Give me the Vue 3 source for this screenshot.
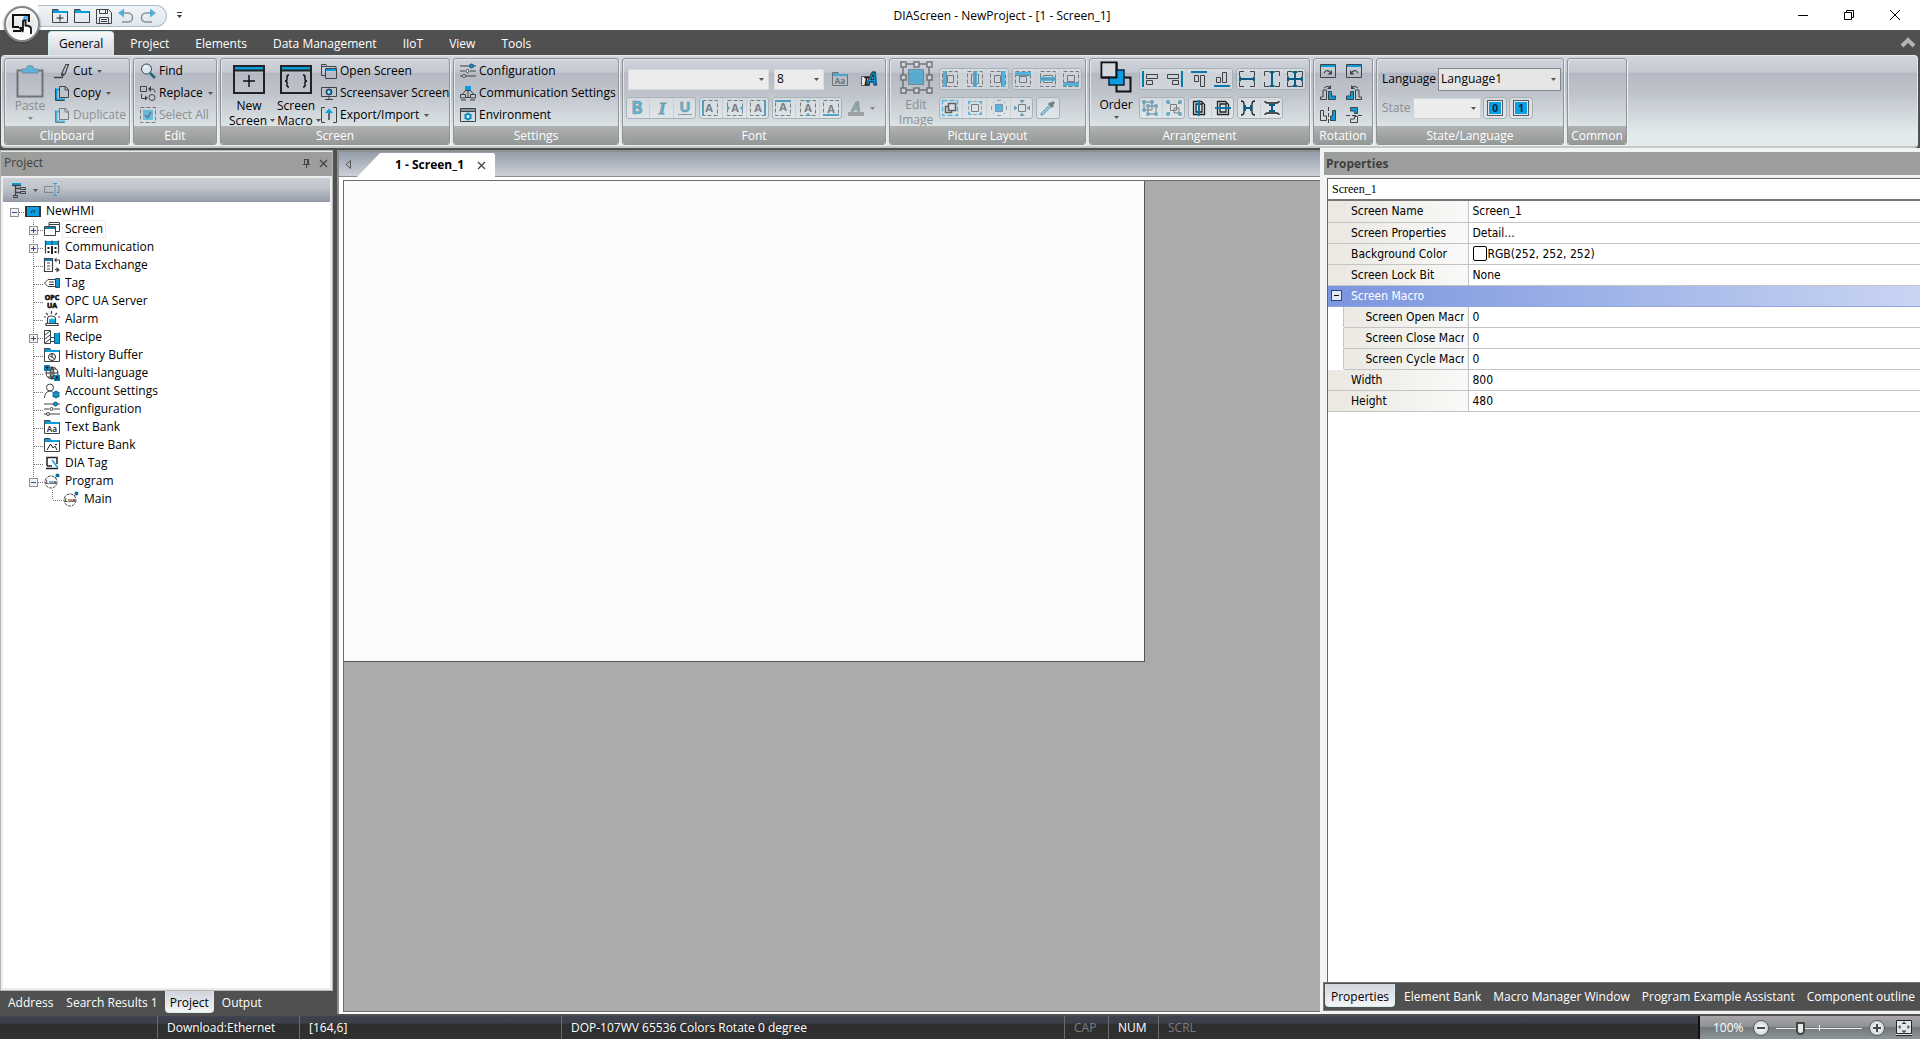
<script setup>
import { ref } from 'vue'

const K = '#3f4347'
const B = '#0a9ddb'
const s = (d, c = K, w = 1) => `<path d="${d}" fill="none" stroke="${c}" stroke-width="${w}"/>`
const f = (d, c = B) => `<path d="${d}" fill="${c}"/>`
const t = (x, y, size, text, c = K, extra = '') =>
  `<text x="${x}" y="${y}" font-size="${size}" font-weight="700" text-anchor="middle" fill="${c}" ${extra}>${text}</text>`
const dash = (d) => `<path d="${d}" fill="none" stroke="${K}" stroke-width="1" stroke-dasharray="4 2"/>`
const folder = s('M.5 14.5V1.5H6l1 2h8.5v11z') + f('M1 2h5l1 1h8v2H1z')
const corners = s('M.5 5V.5H5M11 .5h4.5V5M15.5 11v4.5H11M5 15.5H.5V11')
const frame = dash('M.5 .5h15v15H.5z')

const icons = {
  app: f('M14 4h4v5h-3q-3-2-1-5z', '#5aaef0') + s('M9 15H3V3h16v7M3 19h8', '#111', 2) +
    '<path d="M13 20l-3-4q1-1 3 1V9q1-1.5 2.500 0v4.500q5 0 5.500 3V22" fill="#fff" stroke="#111" stroke-width="1.800"/>',
  newFolder: folder + s('M8 6.5v7M4.5 10h7', '#222'),
  openFolder: folder,
  save: s('M.5 1.5h12l3 3v11H.5zM3.5 1.5v4h8v-4M3.5 15.5v-6h9v6M5 11.5h6M5 13.5h6M9.5 2v3'),
  undo: f('M0 5l6-4.5v9z', '#4fb2dd') + s('M5 5h5a4.5 4.5 0 0 1 0 9H4', '#87919b', 1.5),
  redo: f('M16 5l-6-4.5v9z', '#4fb2dd') + s('M11 5H6a4.5 4.5 0 0 0 0 9h6', '#87919b', 1.5),
  more: s('M0 1.5h5', '#333') + f('M0 4h5l-2.5 3z', '#333'),
  arrow: f('M0 0h5L2.5 3z', '#555'),
  paste: s('M1.5 5.5h25v26h-25z', K, 2) + f('M6 8V4h4q0-3.5 4-3.5t4 3.5h4v4z', '#22a6dc') + s('M6 8V4h4q0-3.5 4-3.5t4 3.5h4v4z', '#4f6f80'),
  cut: s('M0 14.5h9', K, 1.5) + s('M7.5 11L12 1.5h2.5L11 11l-2.5 2z', K, 1.2) + f('M7 10l4 1-3 3z', K),
  copy: s('M5.5 1.5h6l3 3v8h-9zM11 1.5V5h3.5') + s('M5 4.5H2.5v10H11', B, 2) + s('M1.5 3.5v12h9'),
  find: '<circle cx="6.5" cy="6" r="5" fill="#d7e8f0" stroke="#3f4347"/>' + s('M4 5q1-2 3-2', '#fff') + s('M10 10l5 5', '#26627e', 2.5),
  replace: s('M.5 1.5h6v5h-6zM10 4.5q5-2 5 3') + s('M1.5 9v4.5H6') + f('M11 1v6L8 4z', K) + f('M5 10.5v5L8 13z', K) + '<circle cx="12" cy="12.5" r="3" fill="none" stroke="#3f4347"/>',
  selectAll: frame + f('M3 3h10v10H3z', '#2ba7df') + s('M5 8l2.5 2.5L11 5', '#173d52', 1.5),
  newScreen: f('M1 1h30v4H1z') + s('M1 1h30v27H1zM1 5.5h30', '#222', 2) + s('M16 10v12M10 16h12', '#111', 1.5),
  screenMacro: f('M1 1h30v4H1z') + s('M1 1h30v27H1zM1 5.5h30', '#222', 2) + s('M9 10q-2.500 0-2 3t-2 3q2.500 0 2 3t2 3M23 10q2.500 0 2 3t2 3q-2.500 0-2 3t-2 3', '#111', 1.5),
  openScreen: s('M4 12.5H.5V1.5H5l1 2h9V6M.5 3.5h5') + f('M5 6h10v2H5z') + s('M4.5 5.5h11v10h-11z'),
  saver: s('M.5 2.5h15v9H.5zM4 14.5h8M8 12v2') + '<circle cx="8" cy="7" r="3" fill="#0a8dc4" stroke="#26343c"/>' + f('M6.5 6.5l1.5-1 1 1.5-1 2z', '#d9edf5'),
  exportImport: s('M4 .5H.5v15H4M12 .5h3.5v15H12') + s('M8 4v9', K, 1.5) + f('M8 1.5L12 6H4z'),
  config: s('M0 3h10M13 3h3M0 8h5M10 8h6M0 13h2M6 13h10', K, 1.2) + '<circle cx="11.5" cy="3" r="2" fill="#0a9ddb" stroke="#26506a"/><circle cx="7.5" cy="8" r="1.5" fill="#fff" stroke="#3f4347"/><circle cx="4" cy="13" r="1.5" fill="#fff" stroke="#3f4347"/>',
  comm: f('M5 1h6v4H5z') + s('M6 5.5h4M6 5L2.5 9M10 5l3.5 4M8 6v6M6 12.5h4') + s('M.5 9.5h5V13h-5zM10.5 9.5h5V13h-5zM1 15h5M10 15h5'),
  environment: f('M1 2h14v2H1z', '#87939a') + s('M.5 1.5h15v13H.5zM.5 4.5h15') + '<circle cx="8" cy="9.5" r="2.5" fill="#fff" stroke="#0a8dc4" stroke-width="2"/>' + s('M8 5.5V7M8 12v1.5M4.5 7.5l1.5 1M10 10.5l1.5 1M4.5 11.5l1.5-1M10 8.5l1.5-1', '#0a8dc4', 1.5),
  textBank: folder + t(8, 13, 8, 'Aa'),
  fontTA: f('M0 5h9v10H0z', '#e5eaed') + s('M.5 5.5h8v9h-8z', '#555') + t(11, 14, 17, 'A', '#0a9ddb', 'stroke="#123" stroke-width=".8" font-style="italic"') + t(5, 14, 10, 'T', '#111', 'font-style="italic"'),
  bold: t(8, 14, 17, 'B', '#1496d0', 'stroke="#3d6d84" stroke-width=".6"'),
  italic: t(8, 14, 17, 'I', '#1496d0', 'font-style="italic" font-family="Liberation Serif" stroke="#3d6d84" stroke-width=".8"'),
  underline: t(8, 12, 15, 'U', '#1496d0', 'stroke="#3d6d84" stroke-width=".6"') + s('M1 14.5h14', '#46748a'),
  aLeft: frame + f('M0 0h2v16H0z', '#0878a8') + t(7, 12, 11, 'A'),
  aCenter: frame + f('M0 5l3 3-3 3zM16 5l-3 3 3 3z', '#0878a8') + t(8, 12, 11, 'A'),
  aRight: frame + f('M14 0h2v16h-2z', '#0878a8') + t(8, 12, 11, 'A'),
  aTop: frame + f('M0 0h16v2H0z', '#0878a8') + t(8, 11, 11, 'A'),
  aMiddle: frame + f('M5 0h6L8 3zM5 16h6l-3-3z', '#0878a8') + t(8, 12, 11, 'A'),
  aBottom: frame + f('M0 14h16v2H0z', '#0878a8') + t(8, 13, 11, 'A'),
  fontColor: t(8, 11, 13, 'A', '#8dbfd4', 'stroke="#42606e" stroke-width=".8" font-style="italic"') + f('M0 12h16v4H0z', '#808080'),
  editImage: s('M3 3h26v26H3z', '#3f4347', 1.5) + f('M8 8h16v16H8z', '#1fa0d6') + s('M8.5 8.5h15v15h-15z', '#4a6675') +
    [[3, 3], [16, 3], [29, 3], [3, 16], [29, 16], [3, 29], [16, 29], [29, 29]].map(([x, y]) => `<rect x="${x - 2}" y="${y - 2}" width="5" height="5" fill="#dde0e4" stroke="#3f4347" stroke-width="1.5"/>`).join(''),
  pLeft: frame + s('M5.5 4.5h6v7h-6z') + f('M1 0h3v16H1z') + s('M4.5 0v16', '#38617a'),
  pCenter: frame + s('M4.5 3.5h7v9h-7z') + f('M6 0h4v16H6z') + s('M8 0v16', '#215a76'),
  pRight: frame + s('M4.5 4.5h6v7h-6z') + f('M12 0h3v16h-3z') + s('M11.5 0v16', '#38617a'),
  pTop: frame + s('M4.5 5.5h7v6h-7z') + f('M0 1h16v3H0z') + s('M0 4.5h16', '#38617a'),
  pMiddle: frame + s('M3.5 4.5h9v7h-9z') + f('M0 6h16v4H0z') + s('M0 8h16', '#215a76'),
  pBottom: frame + s('M4.5 4.5h7v6h-7z') + f('M0 12h16v3H0z') + s('M0 11.5h16', '#38617a'),
  pOverlap: `<path d="M.5 .5h15v15H.5z" fill="none" stroke="${B}" stroke-dasharray="5 2" stroke-width="1.5"/>` + s('M6.5 3.5h7v7h-7z', '#111', 1.5) + s('M6 6.5H3.5v6h6V11', '#111', 1.5),
  pExpand: s('M4.5 4.5h7v7h-7z') + f('M1 1h4L1 5zM15 1v4l-4-4zM1 15v-4l4 4zM15 15h-4l4-4z') + s('M6 1.5h4M6 14.5h4M1.5 6v4M14.5 6v4', '#718087'),
  pFill: f('M4 4h8v8H4z') + s('M4.5 4.5h7v7h-7z', '#4a6675') + s('M6 .5h4M6 15.5h4M.5 6v4M15.5 6v4M2 2l1 1M14 2l-1 1M2 14l1-1M14 14l-1-1', '#6c777d'),
  pSize: s('M4.5 4.5h7v7h-7z') + f('M5.5 0h5L8 3.5zM5.5 16h5L8 12.5zM0 5.5v5L3.5 8zM16 5.5v5L12.5 8z', '#27769a'),
  dropper: s('M1 15l9-9', '#257da3', 3) + s('M2 14l8-8', '#bce0ee') + s('M9 3l4 4M11 5l3-3', K, 3),
  order: s('M1.5 1.5h15v15h-15z', '#111', 2) + s('M16.5 16.5h14v14h-14z', '#111', 2) + f('M9 9h15v15H9z', '#0a9fe4') + s('M9 9h15v15H9z', '#123', 1.5) + f('M2.5 2.5h13v13h-13z', '#d2d6dd') + s('M1.5 16.5h15v-15', '#111', 2),
  alLeft: s('M1 0v16', '#0878a8', 2) + s('M4.5 3.5h11v4h-11zM4.5 9.5h6v4h-6z'),
  alRight: s('M15 0v16', '#0878a8', 2) + s('M.5 3.5h11v4H.5zM5.5 9.5h6v4h-6z'),
  alTop: s('M0 1h16', '#0878a8', 2) + s('M3.5 4.5h4v6h-4zM9.5 4.5h4v11h-4z'),
  alBottom: s('M0 15h16', '#0878a8', 2) + s('M2.5 6.5h4v5h-4zM8.5 1.5h4v10h-4z'),
  sameW: corners + s('M1 8h14M1 5.5v5M15 5.5v5', '#075d82', 2),
  sameH: corners + s('M8 1v14M5.5 1h5M5.5 15h5', '#075d82', 2),
  sameWH: corners + s('M8 1v14M5.5 1h5M5.5 15h5M1 8h14M1 5.5v5M15 5.5v5', '#075d82', 2),
  group: s('M2 2h8v8H2zM6 6h8v8H6z') + [[2, 2], [10, 2], [2, 10], [6, 6], [14, 6], [14, 14], [6, 14]].map(([x, y]) => `<circle cx="${x}" cy="${y}" r="2" fill="#2186ad"/>`).join(''),
  ungroup: s('M4.5 4.5h6v6h-6zM8 8h5v5H8z') + s('M2 2l2 2M14 2l-2 2M2 14l2-2M14 14l-1-1') + [[2, 2], [14, 2], [2, 14], [14, 14]].map(([x, y]) => `<circle cx="${x}" cy="${y}" r="2" fill="#2186ad"/>`).join(''),
  pageV: s('M2.5 1.5h8l3 3v10h-11zM5 4h6v8H5z', '#222', 1.3) + s('M8 0v16', '#0878a8', 2),
  pageH: s('M2.5 1.5h8l3 3v10h-11zM5 4h6v8H5z', '#222', 1.3) + s('M0 8h16', '#0878a8', 2),
  spaceH: s('M1 1q3 0 3 3v8q0 3-3 3M15 1q-3 0-3 3v8q0 3 3 3', '#222', 1.3) + s('M4 8h8M5 5v6M11 5v6', '#075d82', 2),
  spaceV: s('M1 1q0 2 3 2h8q3 0 3-2M1 15q0-2 3-2h8q3 0 3 2', '#222', 1.3) + s('M8 4v8M5 5h6M5 11h6', '#075d82', 2),
  rotR: f('M1 2h14v2H1z') + s('M.5 1.5h15v13H.5z') + s('M4 10q2-4 6-1', K, 1.2) + f('M12 7v4.5H7.500z', K),
  rotL: f('M1 2h14v2H1z') + s('M.5 1.5h15v13H.5z') + s('M12 10q-2-4-6-1', K, 1.2) + f('M4 7v4.5h4.500z', K),
  rot90R: s('M6.5 5v9.5h-6V12H3V5zM4 3q3-3 6-1') + f('M11 0v4H7z', K) + f('M8 6h3v5h4v4H8z') + s('M8.5 6.5h3V11h4v3.5h-7z'),
  rot90L: s('M9.5 5v9.5h6V12H13V5zM12 3q-3-3-6-1') + f('M5 0v4h4z', K) + f('M8 6H5v5H1v4h7z') + s('M7.5 6.5h-3V11h-4v3.5h7z'),
  flipH: s('M.5 3.5h3V9h3v4.5h-6z') + dash('M8.5 0v16') + f('M16 3h-3v6h-3v5h6z') + s('M15.5 3.5h-3V9h-2v4.5h5z'),
  flipV: f('M4 1h8v6H9V4H4z') + s('M4.5 .5h7v6h-3V4h-4zM4.5 15.5h7v-6h-3V12h-4z') + dash('M0 8.5h16'),
  state0: f('M0 0h16v16H0z', '#555b5e') + f('M1 1h14v14H1z', '#e7e7e7') + f('M2 2h12v12H2z', '#0a9fe4') + t(8, 12, 10, '0', '#0b2738'),
  state1: f('M0 0h16v16H0z', '#555b5e') + f('M1 1h14v14H1z', '#e7e7e7') + f('M2 2h12v12H2z', '#0a9fe4') + t(8, 12, 10, '1', '#0b2738'),
  treeView: f('M1 1h9v3H1z') + s('M1 3.5h9M4.5 4v9M5 6.5h4M5 10.5h4', K, 1.3) + s('M9.5 5.5h5v2h-5zM9.5 9.5h5v2h-5zM2.5 13.5h4v2h-4z'),
  rename: s('M9 4.5H.5v6H9M13 4.5h2v6h-2', '#80858a') + s('M9 1.5h4M11 1.5v12M9 13.5h4', '#39a3d3'),
  pin: s('M2.5 1v5M6.5 1v5M2 1.5h5M1 6.5h7M4.5 7v3M5.500 1v5', '#444'),
  close: s('M1 1l7 7M8 1L1 8', '#444', 1.3),
  hmi: f('M0 3h16v11H0z', '#333') + f('M2 4h12v9H2z', '#0a9fe4') + s('M6 10l1.5-3M8.5 10L10 7', '#123'),
  screens: s('M5 5V1.5h10.5v9H12M5 3.5h10') + f('M1 6h10v2H1z', '#0b83b4') + s('M.5 5.5h11v9H.5z'),
  commTree: f('M1 2h14v4H1z') + s('M1.5 1.5v13M14.5 1.5v13M8 1.5V6', K, 1.2) + s('M4.5 8v2M4.5 12v2M11.5 8v2M11.5 12v2M8 7v8', '#222', 2),
  exchange: s('M.5 1.5h8v13h-8zM3 6h3M3 9h3M3 12h3', K, 1.2) + f('M1 2h7v2H1z', '#0b83b4') + s('M11 3h4.5v4M11 12.5h4') + f('M12.5 .5v5L10 3zM12.5 10v5.5L16 13z', K),
  tag: s('M11 4.5H4L.5 8 4 11.5h7M5 7h5M5 9.5h5') + f('M12 4h3v8h-3z') + s('M11.5 3.5h4v9h-4z'),
  opc: t(8, 7, 7, 'OPC', '#111', 'stroke="#111" stroke-width=".6"') + t(8, 15, 7, 'UA', '#111', 'stroke="#111" stroke-width=".6"'),
  alarm: s('M3.5 12V8q0-3 4-3t4 3v4M2 14.5h12v-2H2zM7.5 0v3M2 2l2 2M13 2l-2 2M0 6h2M14 6h2', K, 1.2) + f('M5 12V9q0-1.5 3-1.5T11 9v3z', '#12a9ec'),
  recipe: s('M.5 1.5h6v13h-6zM1 6l5-4M1 10l5-4M1 14l5-4') + s('M6 8.5h5M6 12.5h5') + f('M11 4h4v10h-4z') + s('M10.5 4v10.5h5v-11', '#075d82'),
  history: folder + '<circle cx="8" cy="10" r="3.5" fill="#fff" stroke="#222"/>' + s('M8 7v3l2 1.5M6 9l2 1', '#222'),
  globe: '<circle cx="8" cy="8" r="6" fill="#fff" stroke="#333"/>' + s('M2 8h12M8 2v12M4 4h8M4 12h8M8 2q-4 6 0 12M8 2q4 6 0 12', '#333') + f('M0 0h6v6H0zM10 10h6v6h-6z', '#0b83b4') + s('M1.5 2.500h3M3 1v4M11.500 15l1.500-4 1.500 4', '#123'),
  account: '<circle cx="6" cy="4.5" r="3.5" fill="none" stroke="#3f4347"/>' + s('M.5 15q0-6 5-7q2 0 3 1') + '<circle cx="12" cy="11.5" r="2.5" fill="#fff" stroke="#0b83b4" stroke-width="2"/>' + s('M12 7.5v8M8.5 9.5l7 4M8.5 13.5l7-4', '#0b6f9c'),
  picture: folder + s('M3 13l3.5-6L9 11l2-2 2 4M11 7.5h2', '#222'),
  diaTag: s('M3 11V2.500h10V9', '#222', 1.5) + s('M2 13.5h12M3 11h5', '#222', 1.5) + s('M8 5l6 8', '#1ba3e4', 1.5),
  lua: '<circle cx="7" cy="9" r="6" fill="none" stroke="#444" stroke-dasharray="3 1"/>' + s('M11 5l2-2', '#444') + '<circle cx="13.5" cy="2.5" r="2" fill="#0b6f9c"/>' + t(7, 11, 6, 'Lua', '#333'),
  fit: f('M0 0h16v16H0z', '#e4e6e8') + s('M.5 .5h15v13H.5zM0 15.5h16', '#222') + f('M5.5 4h5L8 1.5zM5.5 10.5h5L8 13zM4.5 5v4L2 7zM11.5 5v4L14 7z', '#234a5c')
}

const menus = ['General', 'Project', 'Elements', 'Data Management', 'IIoT', 'View', 'Tools']
const quick = [['newFolder', 'New'], ['openFolder', 'Open'], ['save', 'Save'], ['undo', 'Undo'], ['redo', 'Redo']]
const clip = [{ i: 'cut', l: 'Cut', a: true }, { i: 'copy', l: 'Copy', a: true }, { i: 'copy', l: 'Duplicate', d: true }]
const edit = [{ i: 'find', l: 'Find' }, { i: 'replace', l: 'Replace', a: true }, { i: 'selectAll', l: 'Select All', d: true }]
const screen = [{ i: 'openScreen', l: 'Open Screen' }, { i: 'saver', l: 'Screensaver Screen' }, { i: 'exportImport', l: 'Export/Import', a: true }]
const settings = [{ i: 'config', l: 'Configuration' }, { i: 'comm', l: 'Communication Settings' }, { i: 'environment', l: 'Environment' }]
const fontSets = [['bold', 'italic', 'underline'], ['aLeft', 'aCenter', 'aRight'], ['aTop', 'aMiddle', 'aBottom']]
const picSets = [[['pLeft', 'pCenter', 'pRight'], ['pTop', 'pMiddle', 'pBottom']], [['pOverlap', 'pExpand', 'pFill', 'pSize'], ['dropper']]]
const arrSets = [[['alLeft', 'alRight', 'alTop', 'alBottom'], ['sameW', 'sameH', 'sameWH']], [['group', 'ungroup'], ['pageV', 'pageH'], ['spaceH', 'spaceV']]]
const dimmed = ['group', 'ungroup']
const rotations = ['rotR', 'rotL', 'rot90R', 'rot90L', 'flipH', 'flipV']

const tree = [
  { l: 'NewHMI', i: 'hmi', n: 0, x: '-' },
  { l: 'Screen', i: 'screens', n: 1, x: '+', hot: true },
  { l: 'Communication', i: 'commTree', n: 1, x: '+' },
  { l: 'Data Exchange', i: 'exchange', n: 1 },
  { l: 'Tag', i: 'tag', n: 1 },
  { l: 'OPC UA Server', i: 'opc', n: 1 },
  { l: 'Alarm', i: 'alarm', n: 1 },
  { l: 'Recipe', i: 'recipe', n: 1, x: '+' },
  { l: 'History Buffer', i: 'history', n: 1 },
  { l: 'Multi-language', i: 'globe', n: 1 },
  { l: 'Account Settings', i: 'account', n: 1 },
  { l: 'Configuration', i: 'config', n: 1 },
  { l: 'Text Bank', i: 'textBank', n: 1 },
  { l: 'Picture Bank', i: 'picture', n: 1 },
  { l: 'DIA Tag', i: 'diaTag', n: 1 },
  { l: 'Program', i: 'lua', n: 1, x: '-', end: true },
  { l: 'Main', i: 'lua', n: 2, end: true }
]

const props = [
  { k: 'Screen Name', v: 'Screen_1' },
  { k: 'Screen Properties', v: 'Detail...' },
  { k: 'Background Color', v: 'RGB(252, 252, 252)', swatch: true },
  { k: 'Screen Lock Bit', v: 'None' },
  { k: 'Screen Macro', head: true },
  { k: 'Screen Open Macro', v: '0', sub: true },
  { k: 'Screen Close Macro', v: '0', sub: true },
  { k: 'Screen Cycle Macro', v: '0', sub: true },
  { k: 'Width', v: '800' },
  { k: 'Height', v: '480' }
]
const leftTabs = ['Address', 'Search Results 1', 'Project', 'Output']
const rightTabs = ['Properties', 'Element Bank', 'Macro Manager Window', 'Program Example Assistant', 'Component outline']
const objectName = ref('Screen_1')
const language = ref('Language1')
const fontSize = ref('8')
const zoom = ref(27)
</script>

<template>
  <div class="app">
    <header class="titlebar">
      <button class="orb" aria-label="Application menu"><svg width="24" height="24" viewBox="0 0 24 24" v-html="icons.app" /></button>
      <div class="quick">
        <button v-for="q in quick" :key="q[0]" :aria-label="q[1]"><svg width="16" height="16" viewBox="0 0 16 16" v-html="icons[q[0]]" /></button>
      </div>
      <button class="more" aria-label="Customize toolbar"><svg width="5" height="8" v-html="icons.more" /></button>
      <h1>DIAScreen - NewProject - [1 - Screen_1]</h1>
      <div class="window-buttons">
        <button aria-label="Minimize"><svg width="11" height="11"><path d="M0 5.5h10" stroke="#000" /></svg></button>
        <button aria-label="Restore"><svg width="11" height="11"><path d="M.5 2.5h7v7h-7zM2.5 2.5v-2h7v7h-2" fill="none" stroke="#000" /></svg></button>
        <button aria-label="Close"><svg width="11" height="11"><path d="M0 0l10 10M10 0L0 10" stroke="#000" /></svg></button>
      </div>
    </header>

    <nav class="menubar">
      <button v-for="(m, n) in menus" :key="m" :class="{ active: n === 0 }">{{ m }}</button>
      <button class="collapse" aria-label="Collapse ribbon"><svg width="16" height="12"><path d="M2 9l6-6 6 6" fill="none" stroke="#b4b4b4" stroke-width="4" /></svg></button>
    </nav>

    <div class="ribbon">
      <section class="group w-clip">
        <div class="body">
          <button class="big paste dim">
            <svg width="28" height="33" viewBox="0 0 28 33" v-html="icons.paste" />
            <span>Paste</span>
            <svg class="down" width="5" height="3" v-html="icons.arrow" />
          </button>
          <div class="stack">
            <button v-for="b in clip" :key="b.l" class="tool" :class="{ dim: b.d }"><svg width="16" height="16" v-html="icons[b.i]" /><span>{{ b.l }}</span><svg v-if="b.a" class="tri" width="5" height="3" v-html="icons.arrow" /></button>
          </div>
        </div>
        <h2>Clipboard</h2>
      </section>

      <section class="group w-edit">
        <div class="body">
          <div class="stack">
            <button v-for="b in edit" :key="b.l" class="tool" :class="{ dim: b.d }"><svg width="16" height="16" v-html="icons[b.i]" /><span>{{ b.l }}</span><svg v-if="b.a" class="tri" width="5" height="3" v-html="icons.arrow" /></button>
          </div>
        </div>
        <h2>Edit</h2>
      </section>

      <section class="group w-screen">
        <div class="body">
          <button class="big wide"><svg width="32" height="33" v-html="icons.newScreen" /><span>New</span><span class="line">Screen<svg width="5" height="3" v-html="icons.arrow" /></span></button>
          <button class="big wide"><svg width="32" height="33" v-html="icons.screenMacro" /><span>Screen</span><span class="line">Macro<svg width="5" height="3" v-html="icons.arrow" /></span></button>
          <div class="stack">
            <button v-for="b in screen" :key="b.l" class="tool"><svg width="16" height="16" v-html="icons[b.i]" /><span>{{ b.l }}</span><svg v-if="b.a" class="tri" width="5" height="3" v-html="icons.arrow" /></button>
          </div>
        </div>
        <h2>Screen</h2>
      </section>

      <section class="group w-settings">
        <div class="body">
          <div class="stack">
            <button v-for="b in settings" :key="b.l" class="tool"><svg width="16" height="16" v-html="icons[b.i]" /><span>{{ b.l }}</span></button>
          </div>
        </div>
        <h2>Settings</h2>
      </section>

      <section class="group w-font">
        <div class="rows">
          <div class="row">
            <span class="combo family"><select aria-label="Font family"><option></option></select><svg width="5" height="3" v-html="icons.arrow" /></span>
            <span class="combo size"><select v-model="fontSize" aria-label="Font size"><option>8</option></select><svg width="5" height="3" v-html="icons.arrow" /></span>
            <button class="plain dim" aria-label="Text bank"><svg width="16" height="16" v-html="icons.textBank" /></button>
            <button class="plain" aria-label="Font"><svg width="18" height="16" v-html="icons.fontTA" /></button>
          </div>
          <div class="row">
            <div v-for="(set, n) in fontSets" :key="n" class="set dim">
              <button v-for="i in set" :key="i" :aria-label="i"><svg width="16" height="16" v-html="icons[i]" /></button>
            </div>
            <button class="plain colour dim" aria-label="Font color"><svg width="16" height="16" v-html="icons.fontColor" /><svg width="5" height="3" v-html="icons.arrow" /></button>
          </div>
        </div>
        <h2>Font</h2>
      </section>

      <section class="group w-picture">
        <div class="body">
          <button class="big raised dim"><svg width="32" height="33" v-html="icons.editImage" /><span>Edit</span><span>Image</span></button>
          <div class="rows inner">
            <div v-for="(r, n) in picSets" :key="n" class="row">
              <div v-for="(set, m) in r" :key="m" class="set dim">
                <button v-for="i in set" :key="i" :aria-label="i"><svg width="16" height="16" v-html="icons[i]" /></button>
              </div>
            </div>
          </div>
        </div>
        <h2>Picture Layout</h2>
      </section>

      <section class="group w-arrange">
        <div class="body">
          <button class="big raised"><svg width="32" height="33" v-html="icons.order" /><span>Order</span><svg class="down" width="5" height="3" v-html="icons.arrow" /></button>
          <div class="rows inner">
            <div v-for="(r, n) in arrSets" :key="n" class="row">
              <div v-for="(set, m) in r" :key="m" class="set" :class="{ dim: dimmed.includes(set[0]) }">
                <button v-for="i in set" :key="i" :aria-label="i"><svg width="16" height="16" v-html="icons[i]" /></button>
              </div>
            </div>
          </div>
        </div>
        <h2>Arrangement</h2>
      </section>

      <section class="group w-rotate">
        <div class="rotations">
          <button v-for="i in rotations" :key="i" :aria-label="i"><svg width="16" height="16" v-html="icons[i]" /></button>
        </div>
        <h2>Rotation</h2>
      </section>

      <section class="group w-state">
        <div class="rows state">
          <div class="row tight">
            <label for="lang">Language</label>
            <span class="combo lang"><select id="lang" v-model="language"><option>Language1</option></select><svg width="5" height="3" v-html="icons.arrow" /></span>
          </div>
          <div class="row tight">
            <label for="state" class="faint">State</label>
            <span class="combo st"><select id="state" disabled><option></option></select><svg width="5" height="3" v-html="icons.arrow" /></span>
            <div class="set"><button aria-label="State 0"><svg width="16" height="16" v-html="icons.state0" /></button></div>
            <div class="set"><button aria-label="State 1"><svg width="16" height="16" v-html="icons.state1" /></button></div>
          </div>
        </div>
        <h2>State/Language</h2>
      </section>

      <section class="group w-common">
        <div class="body"></div>
        <h2>Common</h2>
      </section>
    </div>

    <main class="workspace">
      <aside class="left">
        <div class="panel">
          <div class="panel-title"><span>Project</span>
            <button aria-label="Pin"><svg width="9" height="10" v-html="icons.pin" /></button>
            <button aria-label="Close panel"><svg width="9" height="9" v-html="icons.close" /></button>
          </div>
          <div class="panel-body">
            <div class="toolbar">
              <button aria-label="Tree view"><svg width="16" height="16" v-html="icons.treeView" /></button>
              <svg width="5" height="3" v-html="icons.arrow" />
              <button aria-label="Rename"><svg width="16" height="16" v-html="icons.rename" /></button>
            </div>
            <ul class="tree">
              <li v-for="r in tree" :key="r.l" :class="'depth' + r.n">
                <svg class="branch" width="21" height="18">
                  <path v-if="r.n" :d="r.end ? 'M10.5 0v10' : 'M10.5 0v18'" stroke="#777" stroke-dasharray="1 1" />
                  <path d="M11 10.5h10" stroke="#777" stroke-dasharray="1 1" />
                  <template v-if="r.x">
                    <rect x="6.5" y="6.5" width="8" height="8" fill="#f4f4f4" stroke="#919191" />
                    <path :d="r.x === '+' ? 'M8 10.5h5M10.5 8v5' : 'M8 10.5h5'" stroke="#2b4a8b" />
                  </template>
                </svg>
                <svg width="16" height="16" v-html="icons[r.i]" />
                <span :class="{ hot: r.hot }">{{ r.l }}</span>
              </li>
            </ul>
          </div>
        </div>
        <div class="tabs">
          <button v-for="l in leftTabs" :key="l" :class="{ active: l === 'Project' }">{{ l }}</button>
        </div>
      </aside>

      <section class="document">
        <div class="doc-tabs">
          <button class="prev" aria-label="Previous tab"><svg width="6" height="9"><path d="M5.5 .5v8L1 4.5z" fill="none" stroke="#555" /></svg></button>
          <div class="doc-tab">
            <b>1 - Screen_1</b>
            <button aria-label="Close tab"><svg width="9" height="9" v-html="icons.close" /></button>
          </div>
        </div>
        <div class="canvas"><div class="hmi-screen"></div></div>
      </section>

      <aside class="right">
        <div class="panel-title strong"><span>Properties</span></div>
        <div class="props">
          <input v-model="objectName" aria-label="Object name">
          <table>
            <tbody>
              <tr v-for="p in props" :key="p.k" :class="{ head: p.head, sub: p.sub }">
                <td class="margin"><svg v-if="p.head" width="11" height="11"><rect x=".5" y=".5" width="10" height="10" fill="#e3e8f6" stroke="#33467c" /><path d="M3 5.5h5" stroke="#111" /></svg></td>
                <th scope="row"><div>{{ p.k }}</div></th>
                <td class="value"><i v-if="p.swatch"></i>{{ p.v }}</td>
              </tr>
            </tbody>
          </table>
        </div>
        <div class="tabs right-tabs">
          <button v-for="l in rightTabs" :key="l" :class="{ active: l === 'Properties' }">{{ l }}</button>
        </div>
      </aside>
    </main>

    <footer class="status">
      <span class="cell c1"></span>
      <span class="cell c2">Download:Ethernet</span>
      <span class="cell c3">[164,6]</span>
      <span class="cell c4">DOP-107WV 65536 Colors Rotate 0 degree</span>
      <span class="cell cap off">CAP</span>
      <span class="cell num">NUM</span>
      <span class="cell scrl off">SCRL</span>
      <div class="zoom">
        <span>100%</span>
        <button class="round" aria-label="Zoom out"><svg width="14" height="14"><path d="M3 7h8" stroke="#444b55" stroke-width="2" /></svg></button>
        <span class="track"><input v-model="zoom" type="range" min="0" max="100" aria-label="Zoom"><i></i></span>
        <button class="round" aria-label="Zoom in"><svg width="14" height="14"><path d="M3 7h8M7 3v8" stroke="#444b55" stroke-width="2" /></svg></button>
        <button class="fit" aria-label="Fit"><svg width="16" height="16" v-html="icons.fit" /></button>
      </div>
    </footer>
  </div>
</template>

<style>
body { background: #505050; }
</style>

<style scoped>
* { box-sizing: border-box; }
.app { height: 100vh; display: flex; flex-direction: column; background: #505050; color: #000; font: 12px/16px "Open Sans", "Noto Sans", sans-serif; overflow: hidden; white-space: nowrap; }
button { margin: 0; padding: 0; border: 0; background: none; font: inherit; color: inherit; display: flex; align-items: center; }
svg { flex: none; display: block; overflow: visible; }
h1, h2 { margin: 0; font: inherit; }
.dim { color: #8b8e91; }
.dim svg { opacity: .62; }

.titlebar { flex: none; height: 30px; background: #fff; display: flex; align-items: center; padding-left: 4px; position: relative; z-index: 2; }
.orb { position: relative; top: 9px; width: 36px; height: 36px; justify-content: center; border: 2px solid #83878b; border-radius: 50%; background: linear-gradient(#fff, #e5e7e8 50%, #fff); box-shadow: inset 0 0 2px 1px #fff, 0 1px 2px #444; }
.quick { height: 22px; margin: 1px 0 0 -2px; padding: 0 10px 0 14px; display: flex; align-items: center; gap: 6px; border: 1px solid #b5bec8; border-left: 0; border-radius: 0 11px 11px 0; background: linear-gradient(#f1f4f7, #e0e6ec); }
.more { margin: 0 0 0 10px; }
h1 { flex: 1; text-align: center; padding: 2px 0 0 24px; }
.window-buttons { display: flex; gap: 35px; padding-right: 19px; }

.menubar { flex: none; height: 25px; display: flex; padding-left: 48px; color: #fff; }
.menubar button { padding: 2px 13px 0; }
.menubar .active { margin: 1px 3px 0 0; padding: 0 10px; color: #000; border: 1px solid #c9edee; border-bottom: 0; border-radius: 4px 4px 0 0; background: linear-gradient(#f6f8f8, #d2d5dd); }
.menubar .collapse { margin: 0 4px 0 auto; padding: 0; }

.ribbon { flex: none; height: 93px; margin: 0 2px 0 1px; padding: 2px 2px 1px; display: flex; gap: 3px; border: 1px solid #e5e9eb; border-bottom: 2px solid #c4c7c8; border-radius: 4px; background: linear-gradient(#d3d6de, #c4c8d1 18%, #b5b9c4 19%, #bfc4cc 42%, #e2eaeb 85%); }
.group { flex: none; display: flex; flex-direction: column; border: 1px solid #8f9396; border-radius: 3px; box-shadow: 1px 1px 0 #eef2f3, inset 1px 1px 0 #e2e5e9; overflow: hidden; }
.group h2 { flex: none; height: 18px; padding-top: 1px; line-height: 17px; color: #fff; text-align: center; background: linear-gradient(#afb2b1, #949897); }
.w-clip { width: 126px; } .w-edit { width: 84px; } .w-screen { width: 230px; } .w-settings { width: 166px; } .w-font { width: 264px; }
.w-picture { width: 197px; } .w-arrange { width: 221px; } .w-rotate { width: 60px; } .w-state { width: 188px; } .w-common { width: 60px; }
.body { flex: 1; min-height: 0; display: flex; padding: 0 0 0 6px; }
.stack { flex: none; display: flex; flex-direction: column; padding-top: 1px; }
.tool { height: 22px; gap: 3px; }
.tool .tri { margin-left: 2px; }
.big { flex: none; flex-direction: column; width: 42px; padding-top: 6px; line-height: 15px; }
.big.paste { width: 36px; margin: 0 6px 0 1px; }
.big.wide { width: 44px; margin-right: 3px; }
.big.raised { padding-top: 2px; width: 42px; margin: 0 2px 0 -1px; }
.big.raised > svg:first-child { margin-bottom: 3px; }
.big .line { display: flex; align-items: center; gap: 3px; margin-right: -6px; }
.big .down { margin-top: 4px; }
.rows { flex: 1; min-height: 0; display: flex; flex-direction: column; gap: 7px; padding: 9px 3px 0; }
.rows.inner { padding: 9px 0 0; }
.row { display: flex; gap: 3px; height: 22px; align-items: center; }
.set { flex: none; display: flex; height: 22px; border: 1px solid #a8b1b6; border-radius: 3px; background: rgba(240, 246, 248, .4); }
.set button { width: 24px; justify-content: center; }
.set button:first-child { width: 22px; justify-content: flex-end; padding-right: 4px; }
.set button:last-child { width: 22px; justify-content: flex-start; padding-left: 3px; }
.set button:only-child { width: 22px; justify-content: center; padding: 0; }
.set button + button { border-left: 1px solid #c9d0d3; }
.plain { padding: 0 3px 0 4px; }
.plain + .plain { margin-left: 3px; }
.plain.colour { gap: 6px; padding-left: 3px; }
.combo { flex: none; display: flex; align-items: center; position: relative; height: 21px; border: 1px solid #d8dadb; background: #ececec; }
.combo select { appearance: none; width: 100%; height: 100%; padding: 0 2px; border: 0; background: none; font: inherit; line-height: 16px; color: #000; }
.combo svg { position: absolute; right: 4px; pointer-events: none; }
.family { width: 141px; margin: 0 2px; }
.size { width: 50px; margin-right: 1px; }
.lang { width: 123px; height: 23px; border-color: #83878b; background: #e6e6e6; }
.st { width: 68px; border-color: #cfd2d3; }
.row.tight { gap: 2px; }
.state { padding-left: 5px; }
.faint { color: #8b8e91; }
.rotations { flex: 1; min-height: 0; display: grid; grid-template-columns: 26px 26px; grid-auto-rows: 22px; padding: 1px 0 0 6px; }

.workspace { flex: 1; min-height: 0; display: flex; }
.left { flex: none; width: 333px; margin: 2px 4px 0 0; display: flex; flex-direction: column; }
.panel { flex: 1; min-height: 0; display: flex; flex-direction: column; border: 1px solid #b4b6b6; }
.panel-title { flex: none; height: 25px; display: flex; align-items: center; gap: 8px; padding: 0 4px 2px 3px; background: #9c9e9c; color: #404040; border-top: 1px solid #e9e9e9; }
.panel-title span { flex: 1; }
.panel-body { flex: 1; background: #fff; border: 2px solid #ececec; }
.toolbar { height: 24px; display: flex; align-items: center; gap: 6px; padding-left: 8px; background: linear-gradient(#cdd0d6, #c0c4cb 40%, #959ca8); }
.tree { list-style: none; margin: 0; padding: 0; }
.tree li { height: 18px; display: flex; align-items: center; }
.tree span { line-height: 16px; padding: 0 2px; margin-left: 3px; }
.tree .hot { outline: 1px solid #ebebeb; }
.tree .depth0 { padding-left: 1px; }
.tree .depth1 { padding-left: 20px; }
.tree .depth2 { padding-left: 39px; }
.tabs { flex: none; height: 25px; padding-left: 1px; display: flex; align-items: flex-start; color: #fff; }
.tabs button { height: 22px; padding: 2px 6px 0 7px; }
.tabs .active { color: #000; padding: 2px 4px 0; margin: 0 1px; border: 1px solid #d6eeee; border-top: 0; border-radius: 0 0 4px 4px; background: linear-gradient(#cfd3dc, #f4f5f5); }

.document { flex: 1; min-width: 0; margin: 2px 0 2px; display: flex; flex-direction: column; border: 2px solid #8d8f90; border-right: 0; border-bottom: 0; background: #fff; }
.doc-tabs { flex: none; height: 25px; display: flex; align-items: center; padding-left: 6px; border-bottom: 1px solid #8a8d90; background: linear-gradient(#969daa, #ccd0d7); }
.doc-tab { align-self: stretch; display: flex; align-items: center; gap: 13px; margin: 1px 0 -1px 6px; padding: 0 9px 0 38px; background: #fff; clip-path: polygon(0 100%, 23px 0, 99% 0, 100% 2px, 100% 100%); }
.doc-tab b { font-weight: 700; }
.canvas { flex: 1; margin: 4px 0 3px 5px; outline: 1px solid #6d6d6d; background: #ababab; overflow: hidden; }
.hmi-screen { width: 801px; height: 481px; background: #fcfcfc; border: solid #555; border-width: 0 1px 1px 0; }

.right { flex: none; width: 600px; margin-bottom: 2px; display: flex; flex-direction: column; border: solid #f2f3f3; border-width: 4px 0 4px 4px; position: relative; }
.strong { font-weight: 700; border-top: 0; height: 24px; padding: 0 4px 1px 2px; }
.props { flex: 1; margin-left: 3px; margin-top: 2px; outline: 3px solid #f2f3f3; background: #fff; border: 1px solid #666; border-right: 0; font: 12px/20px "DejaVu Sans Condensed", "DejaVu Sans", sans-serif; }
.props input { display: block; width: 100%; height: 22px; padding: 0 4px; border: 0; border-bottom: 2px solid #777; font: 12px "Liberation Serif", serif; color: #000; }
table { width: 100%; border-collapse: collapse; table-layout: fixed; }
tr { height: 21px; }
td, th { padding: 0; height: 21px; border-bottom: 1px solid #c4c4c4; text-align: left; font-weight: 400; }
.margin { width: 15px; background: #ebe9e2; }
.margin svg { margin-left: 3px; }
th { width: 125px; padding-left: 8px; border-right: 1px solid #c4c4c4; background: linear-gradient(90deg, #ebe9e2, #f9f9f8); }
th div { overflow: hidden; width: 112px; height: 20px; }
.sub .margin { background: #fff; border-color: #fff; border-right: 1px solid #c4c4c4; }
.sub th { padding-left: 22px; }
.sub th div { width: 98px; }
.value { padding-left: 4px; }
.value i { display: inline-block; width: 14px; height: 15px; border: 1px solid #000; border-radius: 2px; vertical-align: -3px; margin-right: 1px; }
.head { background: linear-gradient(90deg, #7b95de, #c9d5f3); color: #fff; }
.head td, .head th { background: none; border-right: 0; border-bottom-color: #91a5df; }
.right-tabs { background: #505050; height: 27px; padding-left: 1px; padding-top: 1px; outline: 1px solid #777; }
.right-tabs button { height: 23px; padding: 3px 6px 0; }
.right-tabs .active { margin: 0 3px 0 0; padding: 3px 5px 0; }

.status { flex: none; height: 23px; display: flex; color: #fff; background: linear-gradient(#404350, #3c3e46 32%, #2e2e2f 34%, #303130); }
.cell { flex: none; padding: 4px 9px 0; border-left: 1px solid #6b6b6e; }
.c1 { width: 157px; border: 0; } .c2 { width: 142px; } .c3 { width: 262px; }
.c4 { flex: 1; }
.cap { width: 44px; } .num { width: 50px; } .scrl { width: 540px; }
.off { color: #7d7d80; }
.zoom { flex: none; width: 222px; display: flex; align-items: center; gap: 9px; padding: 1px 0 0 13px; color: #fff; border-left: 2px solid #111; background: linear-gradient(#aaa5a9, #8c9092 48%, #737779 50%, #8c9699); }
.round { border-radius: 50%; background: radial-gradient(#fff, #c2c6ca); border: 1px solid #565b60; width: 16px; height: 16px; justify-content: center; }
.track { position: relative; display: flex; width: 86px; margin: 0 -2px; }
.track input { appearance: none; width: 100%; height: 14px; margin: 0; background: linear-gradient(#eee, #eee) center / 100% 1px no-repeat; }
.track input::-webkit-slider-thumb { appearance: none; width: 9px; height: 13px; border: 2px solid #444; border-radius: 1px 1px 5px 5px; background: #e8eaec; }
.track i { position: absolute; left: 43px; top: 4px; height: 6px; border-left: 1px solid #fff; }
.fit { margin-left: 2px; }
</style>
